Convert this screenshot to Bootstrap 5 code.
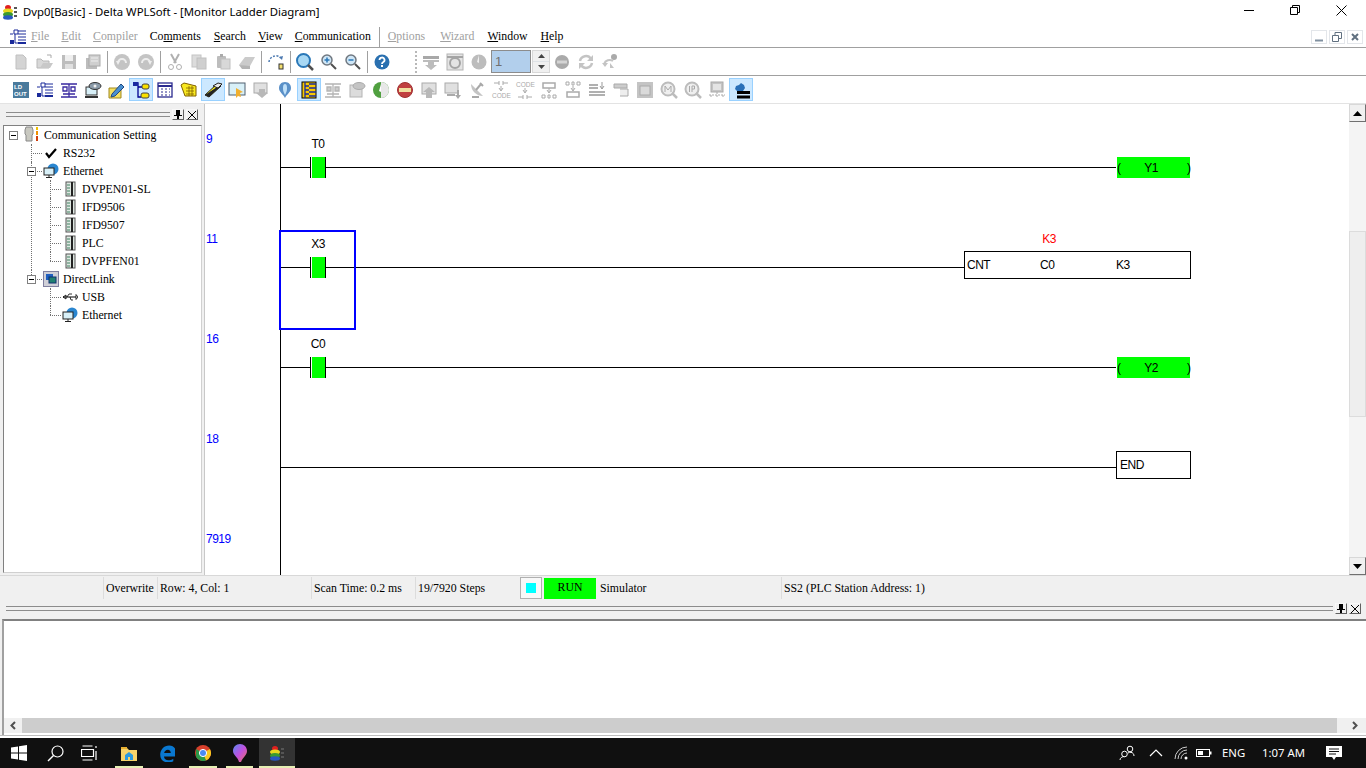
<!DOCTYPE html>
<html>
<head>
  <title>Delta WPLSoft</title>
  <link href="https://cdn.jsdelivr.net/npm/bootstrap@5.3.0/dist/css/bootstrap.min.css" rel="stylesheet">
  <style>
    html, body { width: 1366px; height: 768px; overflow: hidden; }
    body { background: #fff; font-family: "Liberation Serif", serif; font-size: 11.8px; color: #000; line-height: 1; }
    svg { display: block; flex: none; }

    .titlebar { height: 24px; font-family: "Noto Sans", sans-serif; font-size: 11.35px; }
    .titlebar .logo { margin: 0 5px 0 2px; }
    .win-btn { width: 46px; height: 20px; }
    .win-btns { margin-right: 2px; }

    .menubar { height: 24px; border-bottom: 1px solid #a0a0a0; padding: 2px 0 0 9px; }
    .menubar .icon { margin-right: -2px; }
    .menubar .item { padding: 0 6px; }
    .menubar .off { color: #a0a0a0; }
    .menubar .sep { width: 1px; height: 20px; background: #a0a0a0; margin: 0 2px; }
    .menubar .gap-3px { margin-right: 3px; }
    .menubar .gap-1px { margin-right: 1px; }
    .mdi-btn { width: 16px; height: 14px; border: 1px solid #e3e6ea; margin-left: 2px; }
    .mdi-btns { margin-right: 3px; }

    .toolbar { height: 28px; border-bottom: 1px solid #a0a0a0; padding-left: 9px; position: relative; }
    .toolbar.last { border-bottom-color: #e3e3e3; }
    .slot { width: 24px; height: 23px; border: 1px solid transparent; }
    .slot.on { background: #cce8ff; border-color: #99d1ff; }
    .tsep { width: 1px; height: 22px; background: #a0a0a0; margin: 0 2px; }
    .grip { width: 0; height: 22px; border-left: 2px dotted #b8b8b8; margin: 0 2px 0 21px; }
    .spin-input { width: 40px; height: 23px; background: #b2cfec; border: 1px solid #8c8c8c; color: #707070; padding-left: 3px; font-size: 13px; font-family: "Liberation Sans", sans-serif; }
    .spin { width: 18px; height: 23px; margin-left: 1px; border: 1px solid #d8d8d8; background: #f0f0f0; }
    .spin span { flex: 1; }

    .main { height: 471px; }
    .side { width: 205px; background: #f0f0f0; border-right: 1px solid #c8c8c8; }
    .pane-head { height: 21px; padding: 0 6px; }
    .grip-lines { height: 5px; border-top: 1px solid #8c8c8c; border-bottom: 1px solid #8c8c8c; }
    .pane-btn { width: 12px; height: 11px; margin-left: 2px; border: 1px solid #f8f8f8; border-right-color: #606060; border-bottom-color: #606060; background: #f0f0f0; }
    .tree-box { width: 199px; height: 448px; margin-left: 3px; background: #fff; border: 1px solid #d0d0d0; border-top: 1px solid #808080; border-left: 1px solid #808080; padding-left: 5px; }

    .tree, .tree ul { list-style: none; margin: 0; padding: 0; }
    .tree ul { margin-left: 22px; }
    .tree ul ul { margin-left: 7px; }
    .tree .row-t { height: 18px; gap: 4px; color: #000; white-space: nowrap; }
    .tree .row-t span { padding-top: 2px; }
    .tree > li > .row-t { padding-left: 14px; gap: 5px; }
    .tree ul li { position: relative; padding-left: 12px; }
    .tree ul li::before { content: ""; position: absolute; left: 0; top: 0; bottom: 0; border-left: 1px dotted #707070; }
    .tree ul li:last-child::before { bottom: auto; height: 9px; }
    .tree ul li::after { content: ""; position: absolute; left: 0; top: 9px; width: 11px; border-top: 1px dotted #707070; }
    .tree > li { position: relative; }
    .exp { position: absolute; width: 9px; height: 9px; top: 5px; left: -4px; z-index: 1; background: #fff; border: 1px solid #808080; }
    .tree > li > .exp { left: 0; }
    .exp::after { content: ""; position: absolute; left: 1px; top: 3px; width: 5px; height: 1px; background: #000; }

    .ladder { position: relative; background: #fff; }
    .ladder text { font-family: "Liberation Sans", sans-serif; font-size: 12px; letter-spacing: -.5px; }
    .vscroll { width: 17px; background: #f4f4f4; }
    .vscroll .track { flex: 1; }
    .vscroll .track.top { flex: 0 0 109px; }
    .vscroll .thumb { height: 186px; background: #eeeeee; border: 1px solid #dcdcdc; }
    .sbtn { width: 17px; height: 18px; background: #f0f0f0; }
    .vscroll .sbtn { border: 1px solid #d8d8d8; border-right-color: #707070; border-bottom-color: #707070; }

    .statusbar { height: 25px; background: #f0f0f0; border-top: 1px solid #d8d8d8; }
    .cell { height: 22px; border-left: 1px solid #dcdcdc; padding: 2px 0 0 2px; white-space: nowrap; overflow: hidden; }
    .w-a { width: 103px; border-left: 0; }
    .w-b { width: 54px; }
    .w-c { width: 154px; }
    .w-d { width: 104px; }
    .w-e { width: 105px; }
    .w-h { width: 185px; border-left: 0; padding-left: 4px; }
    .run-light { width: 22px; height: 22px; border: 1px solid #b0b0b0; background: #f8f8f8; margin-right: 2px; }
    .run-light span { width: 10px; height: 10px; background: #00ffff; }
    .run { width: 52px; height: 21px; background: #00ff00; }

    .output { height: 135px; background: #f0f0f0; }
    .output .pane-head { height: 19px; padding: 0 5px 2px 6px; }
    .out-box { flex: 1; margin-left: 2px; background: #fff; border-top: 2px solid #808080; border-left: 2px solid #a0a0a0; }
    .hscroll { height: 15px; background: #cdcdcd; margin-bottom: 2px; }
    .hscroll .end { width: 18px; height: 15px; background: #f0f0f0; }
    .hscroll .end.r { width: 29px; padding-right: 8px; }
    .out-foot { height: 3px; background: #fff; border-top: 1px solid #bdbdbd; }

    .taskbar { height: 30px; background: #101010; color: #fff; font-family: "Noto Sans", sans-serif; font-size: 11.35px; }
    .task { width: 36px; height: 30px; }
    .task.open { box-shadow: inset 0 -2px 0 #e6f0b4; }
    .task.cur { background: #333; }
    .t-win, .t-search { width: 37px; }
    .t-view { margin-left: -3px; }
    .t-folder { width: 28px; margin-left: 8px; }
    .t-edge { width: 46px; }
    .t-chrome { width: 28px; }
    .t-paint { width: 27px; margin-left: 9px; }
    .t-wpl { margin-left: 6px; }
    .tray { width: 29px; height: 30px; }
    .t-wifi { width: 21px; }
    .t-batt { width: 25px; }
    .t-eng { width: 23px; margin-left: 6px; }
    .t-time { width: 42px; margin-left: 17px; white-space: nowrap; }
    .t-note { margin: 0 18px 0 15px; }
  </style>
</head>
<body class="d-flex flex-column">

  <svg width="0" height="0" class="position-absolute">
    <defs>
      <symbol id="stack" viewBox="0 0 16 16">
        <ellipse cx="6" cy="3.500" rx="3" ry="2.500" fill="#e02020"/>
        <ellipse cx="6" cy="7" rx="5" ry="2.500" fill="#e8d820"/>
        <ellipse cx="6" cy="10.500" rx="5" ry="2.500" fill="#3a9a30"/>
        <ellipse cx="6" cy="13.500" rx="5" ry="2.200" fill="#2858c0"/>
        <path d="M12 4h3M12 8h3M12 12h3" stroke="#555" stroke-width="2"/>
      </symbol>
      <symbol id="module" viewBox="0 0 16 16">
        <rect x="4" y="1" width="9" height="14" fill="#dfe8e2" stroke="#555"/>
        <path d="M10 1v14" stroke="#222" stroke-width="2"/>
        <path d="M5 4h3M5 7h3M5 10h3M5 13h3" stroke="#3f8060"/>
      </symbol>
      <symbol id="pc" viewBox="0 0 16 16">
        <circle cx="10" cy="6" r="5.500" fill="#2a86d0"/>
        <rect x="1" y="5" width="10" height="7" fill="#d8f0f8" stroke="#222"/>
        <path d="M6 12v2M3 14.500h6" stroke="#222"/>
      </symbol>
      <symbol id="contact" viewBox="0 0 16 21">
        <rect width="16" height="21" fill="#fff"/>
        <rect x="2" width="13" height="21" fill="#00ff00"/>
        <path d="M.5 0v21M15.500 0v21" stroke="#000"/>
      </symbol>
    </defs>
  </svg>

  <!-- title bar -->
  <div class="titlebar d-flex align-items-center">
    <svg class="logo" width="16" height="16"><use href="#stack"/></svg>
    <span class="flex-grow-1">Dvp0[Basic] - Delta WPLSoft - [Monitor Ladder Diagram]</span>
    <div class="win-btns d-flex align-self-start">
      <div class="win-btn d-flex align-items-center justify-content-center"><svg width="10" height="10"><path d="M0 5.500h10" stroke="#000"/></svg></div>
      <div class="win-btn d-flex align-items-center justify-content-center"><svg width="10" height="10"><path d="M.5 2.500h7v7h-7zM2.500 2.500v-2h7v7h-2" fill="none" stroke="#000"/></svg></div>
      <div class="win-btn d-flex align-items-center justify-content-center"><svg width="11" height="11"><path d="M.5.5l10 10M10.500.5l-10 10" stroke="#000"/></svg></div>
    </div>
  </div>

  <!-- menu -->
  <div class="menubar d-flex align-items-center">
    <svg class="icon" width="18" height="18" viewBox="0 0 18 18"><path d="M5 2h4v4h-4zM1 6h3M9 3h8M9 6h8M9 9h8M9 12h8M6 6v9h3" fill="none" stroke="#1a2a9a"/><path d="M1 12h4v4h-4zM9 14h8v2h-8z" fill="#1a2a9a"/></svg>
    <span class="item off"><u>F</u>ile</span>
    <span class="item off"><u>E</u>dit</span>
    <span class="item off"><u>C</u>ompiler</span>
    <span class="item gap-1px">Co<u>m</u>ments</span>
    <span class="item"><u>S</u>earch</span>
    <span class="item"><u>V</u>iew</span>
    <span class="item"><u>C</u>ommunication</span>
    <span class="sep"></span>
    <span class="item off gap-3px"><u>O</u>ptions</span>
    <span class="item off gap-1px"><u>W</u>izard</span>
    <span class="item gap-1px"><u>W</u>indow</span>
    <span class="item"><u>H</u>elp</span>
    <div class="mdi-btns ms-auto d-flex align-items-center">
      <div class="mdi-btn d-flex align-items-end justify-content-center"><svg width="8" height="4"><path d="M0 1.500h8" stroke="#8090a0" stroke-width="2"/></svg></div>
      <div class="mdi-btn d-flex align-items-center justify-content-center"><svg width="10" height="10"><path d="M.5 3.500h6v6h-6zM3 3v-2.500h6.500v6h-3" fill="none" stroke="#607080"/></svg></div>
      <div class="mdi-btn d-flex align-items-center justify-content-center"><svg width="8" height="8"><path d="M1 1l6 6M7 1l-6 6" stroke="#607080" stroke-width="2"/></svg></div>
    </div>
  </div>

  <!-- standard toolbar -->
  <div class="toolbar d-flex align-items-center">
    <div class="slot d-flex align-items-center justify-content-center"><svg width="18" height="18"><path d="M4 2h7l3 3v11h-10z" fill="#d4d4d4" stroke="#c0c0c0"/></svg></div>
    <div class="slot d-flex align-items-center justify-content-center"><svg width="18" height="18"><path d="M1 15v-9h4l2 2h6v7z" fill="#d8d8d8" stroke="#b8b8b8"/><path d="M4 15l3-5h10l-3 5z" fill="#c8c8c8"/><path d="M11 2h4v3" fill="none" stroke="#aaa"/></svg></div>
    <div class="slot d-flex align-items-center justify-content-center"><svg width="18" height="18"><rect x="2" y="2" width="14" height="14" fill="#bdbdbd"/><rect x="5" y="2" width="8" height="6" fill="#efefef"/><rect x="5" y="11" width="8" height="5" fill="#e0e0e0"/></svg></div>
    <div class="slot d-flex align-items-center justify-content-center"><svg width="18" height="18"><rect x="2" y="5" width="11" height="11" fill="#bdbdbd"/><rect x="5" y="2" width="11" height="11" fill="#cfcfcf" stroke="#aaa"/><path d="M7 5h7M7 8h7" stroke="#eee"/></svg></div>
    <span class="tsep"></span>
    <div class="slot d-flex align-items-center justify-content-center"><svg width="18" height="18"><circle cx="9" cy="9" r="8" fill="#c4c4c4"/><path d="M5 10a4 4 0 0 1 8 0" fill="none" stroke="#eee" stroke-width="2"/><path d="M3 8l4 0-2 4z" fill="#eee"/></svg></div>
    <div class="slot d-flex align-items-center justify-content-center"><svg width="18" height="18"><circle cx="9" cy="9" r="8" fill="#c4c4c4"/><path d="M5 10a4 4 0 0 1 8 0" fill="none" stroke="#eee" stroke-width="2"/><path d="M15 8l-4 0 2 4z" fill="#eee"/></svg></div>
    <span class="tsep"></span>
    <div class="slot d-flex align-items-center justify-content-center"><svg width="18" height="18"><path d="M5 1l5 9M13 1l-5 9" stroke="#b0b0b0" stroke-width="2"/><circle cx="5" cy="14" r="2.500" fill="none" stroke="#b0b0b0"/><circle cx="13" cy="14" r="2.500" fill="none" stroke="#b0b0b0"/></svg></div>
    <div class="slot d-flex align-items-center justify-content-center"><svg width="18" height="18"><rect x="2" y="2" width="9" height="12" fill="#dcdcdc" stroke="#c4c4c4"/><rect x="7" y="5" width="9" height="11" fill="#cfcfcf" stroke="#c0c0c0"/></svg></div>
    <div class="slot d-flex align-items-center justify-content-center"><svg width="18" height="18"><rect x="3" y="3" width="9" height="12" rx="1" fill="#bdbdbd"/><rect x="6" y="1" width="3" height="3" fill="#aaa"/><rect x="7" y="6" width="9" height="10" fill="#d8d8d8" stroke="#c0c0c0"/></svg></div>
    <div class="slot d-flex align-items-center justify-content-center"><svg width="18" height="18"><path d="M1 12l6-8h10l-5 9h-8z" fill="#cbcbcb"/><path d="M1 12l3 4h8v-3" fill="#b4b4b4"/></svg></div>
    <span class="tsep"></span>
    <div class="slot d-flex align-items-center justify-content-center"><svg width="18" height="18"><path d="M2 9a7 7 0 0 1 12-4" fill="none" stroke="#4a78b0" stroke-dasharray="2 1.500" stroke-width="1.500"/><rect x="12" y="11" width="4" height="5" fill="#f4e070" stroke="#333"/><path d="M12 4l3 3 1-4z" fill="#4a78b0"/></svg></div>
    <span class="tsep"></span>
    <div class="slot d-flex align-items-center justify-content-center"><svg width="20" height="20"><circle cx="8.500" cy="8.500" r="6.500" fill="#a8d8f4" stroke="#2a78b8" stroke-width="2"/><path d="M13 13l5 5" stroke="#505050" stroke-width="2.500"/></svg></div>
    <div class="slot d-flex align-items-center justify-content-center"><svg width="18" height="18"><circle cx="7" cy="7" r="5" fill="#cfe6f6" stroke="#707880" stroke-width="1.500"/><path d="M4.500 7h5M7 4.500v5" stroke="#2a78b8" stroke-width="1.500"/><path d="M11 11l5 5" stroke="#505050" stroke-width="2"/></svg></div>
    <div class="slot d-flex align-items-center justify-content-center"><svg width="18" height="18"><circle cx="7" cy="7" r="5" fill="#cfe6f6" stroke="#707880" stroke-width="1.500"/><path d="M4.500 7h5" stroke="#2a78b8" stroke-width="1.500"/><path d="M11 11l5 5" stroke="#505050" stroke-width="2"/></svg></div>
    <span class="tsep"></span>
    <div class="slot d-flex align-items-center justify-content-center"><svg width="18" height="18"><circle cx="9" cy="9" r="7.500" fill="#2a70b0"/><path d="M6.500 7a2.500 2.500 0 1 1 3.500 2.300c-.7.4-1 .8-1 1.700" fill="none" stroke="#fff" stroke-width="1.800"/><rect x="8" y="12" width="2" height="2" fill="#fff"/></svg></div>
    <span class="grip"></span>
    <div class="slot d-flex align-items-center justify-content-center"><svg width="18" height="18"><path d="M1 3h16v3h-16z" fill="#a8a8a8"/><path d="M1 7h16v2h-5v3h3l-6 5-6-5h3v-3h-5z" fill="#bcbcbc"/></svg></div>
    <div class="slot d-flex align-items-center justify-content-center"><svg width="18" height="18"><rect x="1" y="1" width="16" height="16" fill="#e4e4e4" stroke="#b4b4b4"/><circle cx="9" cy="10" r="5" fill="none" stroke="#a4a4a4" stroke-width="2"/><path d="M1 4h16" stroke="#a4a4a4" stroke-width="2"/></svg></div>
    <div class="slot d-flex align-items-center justify-content-center"><svg width="18" height="18"><circle cx="9" cy="9" r="7.500" fill="#bcbcbc"/><path d="M9 2v8l-2-1z" fill="#efefef"/></svg></div>
    <div class="spin-input d-flex align-items-center">1</div>
    <div class="spin d-flex flex-column">
      <span class="d-flex align-items-center justify-content-center border-bottom"><svg width="7" height="4"><path d="M3.500 0l3.500 4h-7z" fill="#444"/></svg></span>
      <span class="d-flex align-items-center justify-content-center"><svg width="7" height="4"><path d="M3.500 4l3.500-4h-7z" fill="#444"/></svg></span>
    </div>
    <div class="slot d-flex align-items-center justify-content-center"><svg width="18" height="18"><circle cx="9" cy="9" r="7" fill="#aaa"/><rect x="4" y="7.500" width="10" height="3" fill="#d4d4d4"/></svg></div>
    <div class="slot d-flex align-items-center justify-content-center"><svg width="18" height="18"><path d="M3 8a6 6 0 0 1 11-2M15 10a6 6 0 0 1-11 2" fill="none" stroke="#c4c4c4" stroke-width="2.500"/><path d="M16 2v6h-6zM2 16v-6h6z" fill="#c4c4c4"/></svg></div>
    <div class="slot d-flex align-items-center justify-content-center"><svg width="18" height="18"><circle cx="13" cy="4" r="3" fill="#aaa"/><path d="M3 11a6 6 0 0 1 9-3" fill="none" stroke="#c4c4c4" stroke-width="2"/><path d="M1 10h6l-3 4zM9 10v5h4" fill="#c4c4c4"/></svg></div>
  </div>

  <!-- ladder toolbar -->
  <div class="toolbar last d-flex align-items-center">
    <div class="slot d-flex align-items-center justify-content-center"><svg width="16" height="16"><rect width="16" height="16" fill="#4a7a9c"/><text x="1" y="7" font-size="6" font-family="Liberation Sans" font-weight="700" fill="#fff">LD</text><text x="1" y="14" font-size="6" font-family="Liberation Sans" font-weight="700" fill="#fff">OUT</text></svg></div>
    <div class="slot d-flex align-items-center justify-content-center"><svg width="18" height="18" viewBox="0 0 18 18"><path d="M5 2h4v4h-4zM1 6h3M9 3h8M9 6h8M9 9h8M9 12h8M6 6v9h3" fill="none" stroke="#1a2a9a"/><path d="M1 12h4v4h-4zM9 14h8v2h-8z" fill="#1a2a9a"/></svg></div>
    <div class="slot d-flex align-items-center justify-content-center"><svg width="18" height="18"><path d="M1 3h16M9 3v13M3 6h4v4h-4zM11 6h4v4h-4zM3 13h12M1 16h16" fill="none" stroke="#3a2aa0" stroke-width="1.300"/></svg></div>
    <div class="slot d-flex align-items-center justify-content-center"><svg width="18" height="18"><rect x="2" y="6" width="11" height="8" fill="#d8f0f8" stroke="#333"/><ellipse cx="11" cy="5" rx="6" ry="3.500" fill="#8a9aa8" stroke="#333"/><circle cx="11" cy="5" r="1.500" fill="#eee"/><path d="M1 16h13" stroke="#333" stroke-width="2"/></svg></div>
    <div class="slot d-flex align-items-center justify-content-center"><svg width="18" height="18"><path d="M1 7h12v10h-12z" fill="#f4e060" stroke="#a08820"/><path d="M4 13l9-10 3 3-9 9-4 1z" fill="#4a90d0" stroke="#204880"/></svg></div>
    <div class="slot on d-flex align-items-center justify-content-center"><svg width="18" height="18"><path d="M3 2h3v14h3M6 6h4" fill="none" stroke="#000090" stroke-width="1.300"/><rect x="1" y="1" width="5" height="4" fill="#1a2aa0"/><rect x="10" y="3" width="7" height="5" rx="2" fill="#f8e000" stroke="#444"/><rect x="9" y="12" width="8" height="5" rx="2" fill="#f8e000" stroke="#444"/></svg></div>
    <div class="slot d-flex align-items-center justify-content-center"><svg width="18" height="18"><rect x="2" y="2" width="14" height="14" fill="#fff" stroke="#2a2a90" stroke-width="1.300"/><path d="M2 5h14" stroke="#2a2a90" stroke-width="2"/><path d="M5 8h2M9 8h2M13 8h1M5 11h2M9 11h2M13 11h1M5 14h2M9 14h2M13 14h1" stroke="#2a2a90"/></svg></div>
    <div class="slot d-flex align-items-center justify-content-center"><svg width="18" height="18"><path d="M1 4l3-2 12 3v10h-11z" fill="#f8e820" stroke="#806000"/><path d="M6 7h8M6 10h8M6 13h8M9 5v10M12 5v10" stroke="#806000" stroke-width=".8"/></svg></div>
    <div class="slot on d-flex align-items-center justify-content-center"><svg width="20" height="20"><path d="M2 15l12-11 4 2-12 11z" fill="#f8f020" stroke="#222"/><path d="M2 15l12-8 4-1-12 11z" fill="#222"/><path d="M10 6l5-3 4 1-4 4z" fill="#e8e8e8" stroke="#222"/></svg></div>
    <div class="slot d-flex align-items-center justify-content-center"><svg width="18" height="18"><rect x="1" y="2" width="16" height="12" fill="#d8f0f8" stroke="#506070"/><path d="M8 7v10l2-2 3 1-1-4 3-1z" fill="#f0b030"/></svg></div>
    <div class="slot d-flex align-items-center justify-content-center"><svg width="18" height="18"><rect x="2" y="2" width="13" height="10" fill="#e0e0e0" stroke="#aaa"/><path d="M7 8h6v4h3l-6 5-6-5h3z" fill="#b8b8b8"/></svg></div>
    <div class="slot d-flex align-items-center justify-content-center"><svg width="16" height="18"><path d="M8 1c4 0 6 3 6 6 0 4-4 6-6 10-2-4-6-6-6-10 0-3 2-6 6-6z" fill="#5a90c8"/><path d="M8 3c2 0 2 3 2 5s-1 4-2 6c-1-2-2-4-2-6s0-5 2-5z" fill="#c0e0f8"/></svg></div>
    <div class="slot on d-flex align-items-center justify-content-center"><svg width="18" height="18"><rect x="2" y="1" width="14" height="16" fill="#f8c800" stroke="#000"/><path d="M5 1v16M5 5h4M5 9h4M5 13h4M9 3h7M9 7h7M9 11h7M9 15h7" stroke="#1a2aa0" stroke-width="1.300"/></svg></div>
    <div class="slot d-flex align-items-center justify-content-center"><svg width="18" height="18"><path d="M1 3h16M9 3v13M3 6h4v4h-4zM11 6h4v4h-4zM3 13h12M1 16h16" fill="#ccc" stroke="#b4b4b4" stroke-width="1.300"/></svg></div>
    <div class="slot d-flex align-items-center justify-content-center"><svg width="18" height="18"><rect x="2" y="4" width="12" height="12" fill="#dcdcdc" stroke="#b4b4b4"/><ellipse cx="11" cy="5" rx="6" ry="3.500" fill="#c4c4c4" stroke="#aaa"/></svg></div>
    <div class="slot d-flex align-items-center justify-content-center"><svg width="18" height="18"><circle cx="9" cy="9" r="8" fill="#50a040"/><path d="M9 1a8 8 0 0 1 0 16z" fill="#e8e8e8"/><path d="M9 3v8l-2-1z" fill="#fff"/></svg></div>
    <div class="slot d-flex align-items-center justify-content-center"><svg width="18" height="18"><circle cx="9" cy="9" r="7.500" fill="#c04040" stroke="#a03030"/><rect x="3" y="7" width="12" height="4" fill="#f0e0a0"/></svg></div>
    <div class="slot d-flex align-items-center justify-content-center"><svg width="18" height="18"><rect x="2" y="2" width="14" height="11" fill="#e0e0e0" stroke="#aaa"/><path d="M6 17v-6h-3l6-5 6 5h-3v6z" fill="#b8b8b8"/></svg></div>
    <div class="slot d-flex align-items-center justify-content-center"><svg width="18" height="18"><rect x="1" y="2" width="13" height="10" fill="#e0e0e0" stroke="#aaa"/><path d="M3 14h8" stroke="#aaa" stroke-width="2"/><path d="M13 9h2v5h2l-3 4-3-4h2z" fill="#a8a8a8"/></svg></div>
    <div class="slot d-flex align-items-center justify-content-center"><svg width="18" height="18"><path d="M3 3a12 12 0 0 0 12 12z" fill="#c4c4c4"/><path d="M8 9l5-6M12 2l3 3M4 16h7" stroke="#a8a8a8" stroke-width="2"/></svg></div>
    <div class="slot d-flex align-items-center justify-content-center"><svg width="20" height="20"><path d="M3 3h5M12 3h5M8 1v4M12 1v4M10 6v4M8 8l2 3 2-3" fill="none" stroke="#aaa"/><text x="1" y="18" font-size="6.500" font-family="Liberation Sans" fill="#aaa">CODE</text></svg></div>
    <div class="slot d-flex align-items-center justify-content-center"><svg width="20" height="20"><text x="1" y="7" font-size="6.500" font-family="Liberation Sans" fill="#aaa">CODE</text><path d="M3 17h5M12 17h5M8 15v4M12 15v4M10 8v4M8 10l2 3 2-3" fill="none" stroke="#aaa"/></svg></div>
    <div class="slot d-flex align-items-center justify-content-center"><svg width="18" height="18"><rect x="3" y="2" width="12" height="5" fill="none" stroke="#aaa" stroke-width="1.500"/><path d="M9 7v4M7 9l2 3 2-3" fill="none" stroke="#aaa"/><path d="M2 14h3v3h-3zM8 14h2v3h-2zM13 14h3v3h-3z" fill="none" stroke="#aaa"/></svg></div>
    <div class="slot d-flex align-items-center justify-content-center"><svg width="18" height="18"><path d="M2 1h3v3h-3zM8 1h2v3h-2zM13 1h3v3h-3z" fill="none" stroke="#aaa"/><path d="M9 5v4M7 7l2 3 2-3" fill="none" stroke="#aaa"/><rect x="3" y="11" width="12" height="5" fill="none" stroke="#aaa" stroke-width="1.500"/></svg></div>
    <div class="slot d-flex align-items-center justify-content-center"><svg width="18" height="18"><path d="M1 4h9M1 7h9M1 11h16M1 14h16" stroke="#b0b0b0" stroke-width="2"/><path d="M14 1v6M12 5l2 3 2-3" fill="none" stroke="#999"/></svg></div>
    <div class="slot d-flex align-items-center justify-content-center"><svg width="18" height="18"><path d="M2 3h13v4h-13z" fill="#ccc" stroke="#aaa"/><path d="M8 8h8v7h-8" fill="#eee" stroke="#aaa"/></svg></div>
    <div class="slot d-flex align-items-center justify-content-center"><svg width="18" height="18"><rect x="1" y="1" width="16" height="16" fill="#c4c4c4"/><rect x="4" y="5" width="10" height="9" fill="#dadada" stroke="#aaa"/></svg></div>
    <div class="slot d-flex align-items-center justify-content-center"><svg width="18" height="18"><circle cx="8" cy="8" r="6.500" fill="#efefef" stroke="#bcbcbc" stroke-width="2"/><path d="M12 12l5 5" stroke="#bcbcbc" stroke-width="2.500"/><path d="M5 11v-6l3 4 3-4v6" fill="none" stroke="#aaa"/></svg></div>
    <div class="slot d-flex align-items-center justify-content-center"><svg width="18" height="18"><circle cx="8" cy="8" r="6.500" fill="#efefef" stroke="#bcbcbc" stroke-width="2"/><path d="M12 12l5 5" stroke="#bcbcbc" stroke-width="2.500"/><path d="M5.500 5v6M8 11v-6h2.500v3h-2.500" fill="none" stroke="#aaa"/></svg></div>
    <div class="slot d-flex align-items-center justify-content-center"><svg width="18" height="18"><rect x="3" y="1" width="12" height="10" fill="#c4c4c4" stroke="#aaa"/><rect x="5" y="3" width="8" height="6" fill="#e4e4e4"/><path d="M1 14h16M3 14v3M9 11v6M15 14v3" stroke="#aaa" stroke-dasharray="2 1"/></svg></div>
    <div class="slot on d-flex align-items-center justify-content-center"><svg width="18" height="18"><path d="M3 8l1-3 3-1 2-2 3 2 1 3-2 3h-6z" fill="#2a70b8"/><rect x="5" y="10" width="13" height="3" fill="#000"/><rect x="5" y="14.500" width="13" height="3" fill="#000"/></svg></div>
  </div>

  <div class="main d-flex">
    <!-- communication tree -->
    <div class="side d-flex flex-column">
      <div class="pane-head d-flex align-items-center">
        <div class="grip-lines flex-grow-1"></div>
        <div class="pane-btn d-flex align-items-center justify-content-center"><svg width="8" height="9"><path d="M2 0h4v5h2v1h-3v3h-2v-3h-3v-1h2z" fill="#000"/></svg></div>
        <div class="pane-btn d-flex align-items-center justify-content-center"><svg width="8" height="8"><path d="M0 0l8 8M8 0l-8 8" stroke="#000"/></svg></div>
      </div>
      <div class="tree-box">
        <ul class="tree">
          <li>
            <span class="exp"></span>
            <div class="row-t d-flex align-items-center">
              <svg width="16" height="18" viewBox="0 0 16 18"><path d="M3 1h6l1 3v4l-1 1v6h-6v-6l-1-1v-4z" fill="#c8c8c0" stroke="#888"/><path d="M14 1v3" stroke="#f0c000" stroke-width="2"/><path d="M14 5v4" stroke="#f09000" stroke-width="2"/><path d="M14 10v5" stroke="#d04010" stroke-width="2"/></svg>
              <span>Communication Setting</span>
            </div>
            <ul>
              <li><div class="row-t d-flex align-items-center"><svg width="16" height="16"><path d="M3 8l3 4 7-8" fill="none" stroke="#000" stroke-width="2.200"/></svg><span>RS232</span></div></li>
              <li>
                <span class="exp"></span>
                <div class="row-t d-flex align-items-center"><svg width="16" height="16"><use href="#pc"/></svg><span>Ethernet</span></div>
                <ul>
                  <li><div class="row-t d-flex align-items-center"><svg width="16" height="16"><use href="#module"/></svg><span>DVPEN01-SL</span></div></li>
                  <li><div class="row-t d-flex align-items-center"><svg width="16" height="16"><use href="#module"/></svg><span>IFD9506</span></div></li>
                  <li><div class="row-t d-flex align-items-center"><svg width="16" height="16"><use href="#module"/></svg><span>IFD9507</span></div></li>
                  <li><div class="row-t d-flex align-items-center"><svg width="16" height="16"><use href="#module"/></svg><span>PLC</span></div></li>
                  <li><div class="row-t d-flex align-items-center"><svg width="16" height="16"><use href="#module"/></svg><span>DVPFEN01</span></div></li>
                </ul>
              </li>
              <li>
                <span class="exp"></span>
                <div class="row-t d-flex align-items-center"><svg width="16" height="16"><rect x=".5" y=".5" width="15" height="15" fill="#d0d0d8" stroke="#8080a0"/><rect x="3" y="3" width="7" height="6" fill="#2060c0"/><rect x="6" y="6" width="7" height="6" fill="#208070" stroke="#103070"/></svg><span>DirectLink</span></div>
                <ul>
                  <li><div class="row-t d-flex align-items-center"><svg width="16" height="16"><path d="M1 8h13" stroke="#000"/><path d="M1 8l3-2v4zM14 5.500l2 2.500-2 2.500zM5 8l2-3h3M8 8l1 3h2" fill="none" stroke="#000" stroke-width=".8"/></svg><span>USB</span></div></li>
                  <li><div class="row-t d-flex align-items-center"><svg width="16" height="16"><use href="#pc"/></svg><span>Ethernet</span></div></li>
                </ul>
              </li>
            </ul>
          </li>
        </ul>
      </div>
    </div>

    <!-- ladder diagram, coordinates are page x minus 205 and page y minus 104 -->
    <div class="ladder flex-grow-1">
      <svg width="1144" height="471" viewBox="0 0 1144 471" shape-rendering="crispEdges">
        <g fill="#0000ff">
          <text x="1" y="39">9</text>
          <text x="1" y="139">11</text>
          <text x="1" y="239">16</text>
          <text x="1" y="339">18</text>
          <text x="1" y="439">7919</text>
        </g>
        <path d="M75.500 0v471" stroke="#000"/>
        <path d="M75 63.500h836M75 163.500h684M75 263.500h836M75 363.500h836" stroke="#000" fill="none"/>

        <use href="#contact" x="105" y="53" width="16" height="21"/>
        <text x="113" y="44" text-anchor="middle">T0</text>
        <use href="#contact" x="105" y="153" width="16" height="21"/>
        <text x="113" y="144" text-anchor="middle">X3</text>
        <use href="#contact" x="105" y="253" width="16" height="21"/>
        <text x="113" y="244" text-anchor="middle">C0</text>

        <rect x="75" y="127" width="75" height="98" fill="none" stroke="#0000ff" stroke-width="2"/>

        <rect x="912" y="53" width="73" height="21" fill="#00ff00"/>
        <text x="912" y="68">(</text><text x="946" y="68" text-anchor="middle">Y1</text><text x="982" y="68">)</text>

        <text x="844" y="139" text-anchor="middle" fill="#ff0000">K3</text>
        <rect x="759.500" y="147.500" width="226" height="27" fill="#fff" stroke="#000"/>
        <text x="762" y="165">CNT</text><text x="835" y="165">C0</text><text x="911" y="165">K3</text>

        <rect x="912" y="253" width="73" height="21" fill="#00ff00"/>
        <text x="912" y="268">(</text><text x="946" y="268" text-anchor="middle">Y2</text><text x="982" y="268">)</text>

        <rect x="911.500" y="347.500" width="74" height="27" fill="#fff" stroke="#000"/>
        <text x="915" y="365">END</text>
      </svg>
    </div>

    <div class="vscroll d-flex flex-column">
      <div class="sbtn d-flex align-items-center justify-content-center"><svg width="9" height="5"><path d="M4.500 0l4.500 5h-9z" fill="#000"/></svg></div>
      <div class="track top"></div>
      <div class="thumb"></div>
      <div class="track"></div>
      <div class="sbtn d-flex align-items-center justify-content-center"><svg width="9" height="5"><path d="M4.500 5l4.500-5h-9z" fill="#000"/></svg></div>
    </div>
  </div>

  <!-- status bar -->
  <div class="statusbar d-flex align-items-center">
    <div class="cell w-a"></div>
    <div class="cell w-b d-flex align-items-center">Overwrite</div>
    <div class="cell w-c d-flex align-items-center">Row: 4, Col: 1</div>
    <div class="cell w-d d-flex align-items-center">Scan Time: 0.2 ms</div>
    <div class="cell w-e d-flex align-items-center">19/7920 Steps</div>
    <div class="run-light d-flex align-items-center justify-content-center"><span></span></div>
    <div class="run d-flex align-items-center justify-content-center">RUN</div>
    <div class="cell w-h d-flex align-items-center">Simulator</div>
    <div class="cell d-flex align-items-center">SS2 (PLC Station Address: 1)</div>
  </div>

  <!-- output pane -->
  <div class="output d-flex flex-column">
    <div class="pane-head d-flex align-items-center">
      <div class="grip-lines flex-grow-1"></div>
      <div class="pane-btn d-flex align-items-center justify-content-center"><svg width="8" height="9"><path d="M2 0h4v5h2v1h-3v3h-2v-3h-3v-1h2z" fill="#000"/></svg></div>
      <div class="pane-btn d-flex align-items-center justify-content-center"><svg width="8" height="8"><path d="M0 0l8 8M8 0l-8 8" stroke="#000"/></svg></div>
    </div>
    <div class="out-box d-flex flex-column justify-content-end">
      <div class="hscroll d-flex justify-content-between">
        <div class="end d-flex align-items-center justify-content-center"><svg width="6" height="9"><path d="M5 1l-3.500 3.500 3.500 3.500" fill="none" stroke="#505050" stroke-width="2"/></svg></div>
        <div class="end r d-flex align-items-center justify-content-end"><svg width="6" height="9"><path d="M1 1l3.500 3.500-3.500 3.500" fill="none" stroke="#505050" stroke-width="2"/></svg></div>
      </div>
    </div>
  </div>
  <div class="out-foot"></div>

  <!-- windows taskbar -->
  <div class="taskbar d-flex align-items-center">
    <div class="task t-win d-flex align-items-center justify-content-center"><svg width="16" height="16"><path d="M0 2.500l7-1v6h-7zM8 1.300l8-1.300v7.500h-8zM0 8.500h7v6l-7-1zM8 8.500h8v7.500l-8-1.300z" fill="#fff"/></svg></div>
    <div class="task t-search d-flex align-items-center justify-content-center"><svg width="17" height="17"><circle cx="10.500" cy="6.500" r="5.500" fill="none" stroke="#fff" stroke-width="1.200"/><path d="M6.500 10.500l-5.500 5.500" stroke="#fff" stroke-width="1.500"/></svg></div>
    <div class="task t-view d-flex align-items-center justify-content-center"><svg width="17" height="16"><path d="M1.500 1h10M1.500 15h10M.5 4.500h12v7h-12zM15 1v2M15 6v9" fill="none" stroke="#fff" stroke-width="1.200"/></svg></div>
    <div class="task open t-folder d-flex align-items-center justify-content-center"><svg width="16" height="15"><path d="M0 2h6l2 2h8v11h-16z" fill="#f6d36a"/><path d="M0 1h6v2h-6z" fill="#e8b030"/><path d="M4 14v-5l4-3 4 3v5h-3v-3h-2v3z" fill="#2a9ae0"/></svg></div>
    <div class="task t-edge d-flex align-items-center justify-content-center"><svg width="17" height="17" viewBox="0 0 17 17"><path d="M16 11.500h-10c.2 2.500 2 3.700 4.300 3.700 1.700 0 3.500-.5 5-1.500v2.500c-1.500.8-3.300 1.200-5.500 1.200-4.300 0-7.600-2.800-7.600-7.600 0-5 3.700-9.300 9-9.300 4 0 6.800 2.800 6.800 7 0 1-.1 2-.1 4zm-3.200-3.500c0-2-1.100-3.300-3-3.300-1.800 0-3.300 1.400-3.700 3.300z" fill="#0a78d0"/></svg></div>
    <div class="task open t-chrome d-flex align-items-center justify-content-center"><svg width="16" height="16" viewBox="0 0 16 16"><circle cx="8" cy="8" r="8" fill="#d8402c"/><path d="M8 8l6.900-4a8 8 0 0 1-4 11.500z" fill="#f8c820"/><path d="M8 8l3 7.500a8 8 0 0 1-9.900-3.500l-.1-8z" fill="#2a9a48"/><circle cx="8" cy="8" r="3.600" fill="#4a8af4" stroke="#fff"/></svg></div>
    <div class="task open t-paint d-flex align-items-center justify-content-center"><svg width="14" height="18" viewBox="0 0 14 18"><defs><linearGradient id="pg" x1="0" y1="0" x2="1" y2="1"><stop offset="0" stop-color="#5a8af4"/><stop offset=".5" stop-color="#c050e0"/><stop offset="1" stop-color="#f07060"/></linearGradient></defs><path d="M7 0c4 0 7 3 7 7 0 4-4 6-6 11h-2c-1-5-6-7-6-11 0-4 3-7 7-7z" fill="url(#pg)"/></svg></div>
    <div class="task cur open t-wpl d-flex align-items-center justify-content-center"><svg width="16" height="16"><use href="#stack"/></svg></div>

    <div class="ms-auto d-flex align-items-center">
      <div class="tray d-flex align-items-center justify-content-center"><svg width="16" height="16"><circle cx="5.500" cy="9" r="2.800" fill="none" stroke="#fff"/><circle cx="11" cy="4" r="2.800" fill="none" stroke="#fff"/><path d="M1 15c0-2 2-3.500 4.500-3.500M9 8c1-.7 2-.8 3-.7 2 .3 3 2 3 3.700" fill="none" stroke="#fff"/></svg></div>
      <div class="tray d-flex align-items-center justify-content-center"><svg width="14" height="8"><path d="M1 7l6-6 6 6" fill="none" stroke="#fff" stroke-width="1.200"/></svg></div>
      <div class="tray t-wifi d-flex align-items-center justify-content-center"><svg width="14" height="14"><path d="M1 13a12 12 0 0 1 12-12M4 13a9 9 0 0 1 9-9M7 13a6 6 0 0 1 6-6" fill="none" stroke="#ccc"/><circle cx="12" cy="12" r="1.500" fill="#fff"/></svg></div>
      <div class="tray t-batt d-flex align-items-center justify-content-center"><svg width="16" height="10"><rect x=".5" y="1.500" width="13" height="7" fill="none" stroke="#fff"/><rect x="2" y="3" width="5" height="4" fill="#fff"/><rect x="14" y="3.500" width="1.500" height="3" fill="#fff"/></svg></div>
      <span class="t-eng">ENG</span>
      <span class="t-time">1:07 AM</span>
      <div class="tray t-note d-flex align-items-center justify-content-center"><svg width="16" height="16"><path d="M0 1h16v11h-6l-2 3-2-3h-6z" fill="#fff"/><path d="M3 4h10M3 6.500h10M3 9h7" stroke="#101010"/></svg></div>
    </div>
  </div>

  <script src="https://cdn.jsdelivr.net/npm/bootstrap@5.3.0/dist/js/bootstrap.bundle.min.js"></script>
</body>
</html>
